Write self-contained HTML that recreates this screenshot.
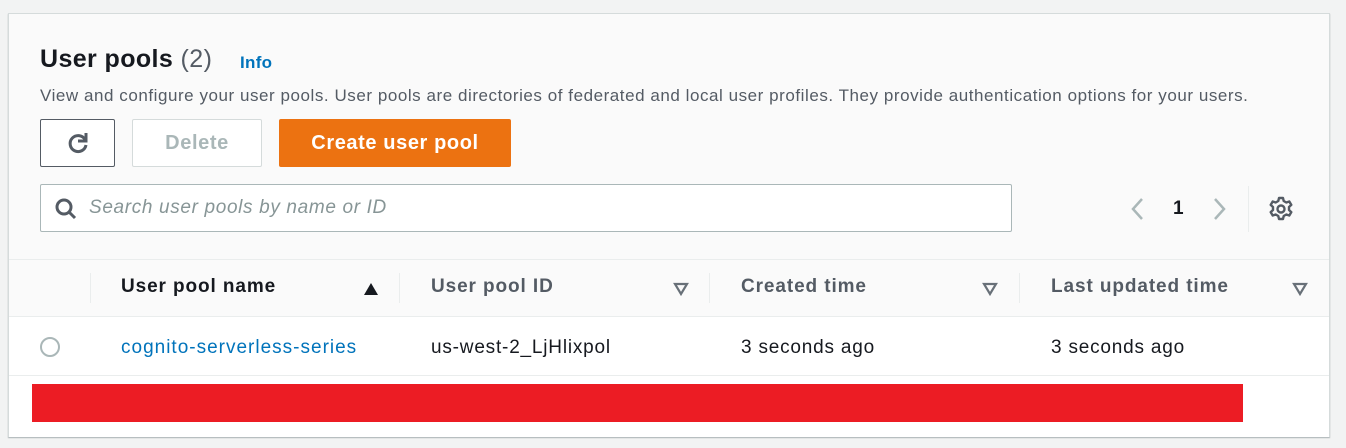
<!DOCTYPE html>
<html><head><style>
*{box-sizing:border-box;margin:0;padding:0}
body{width:1346px;height:448px;background:#f2f3f3;font-family:"Liberation Sans",sans-serif;position:relative;overflow:hidden;color:#16191f}
.panel{position:absolute;left:8px;top:13px;width:1322px;height:424px;background:#fafafa;border:1px solid #d5dbdb;box-shadow:0 1px 1px rgba(0,28,36,.3)}
.abs{position:absolute;white-space:nowrap}
.title{left:31px;top:31px;font-size:25px;font-weight:bold;letter-spacing:.4px}
.title span{font-weight:normal;color:#545b64}
.info{left:231px;top:39px;font-size:17px;font-weight:bold;color:#0073bb;letter-spacing:.3px}
.desc{left:31px;top:72px;font-size:17px;letter-spacing:.55px;color:#545b64}
.btn{position:absolute;border-radius:2px;font-weight:bold;font-size:20px;letter-spacing:.6px;display:flex;align-items:center;justify-content:center}
.search{left:31px;top:170px;width:972px;height:48px;border:1px solid #aab7b8;background:#fff;border-radius:2px}
.search .ph{position:absolute;left:48px;top:12px;font-size:19px;font-style:italic;color:#879596;letter-spacing:.65px}
.thead{left:0;top:245px;width:1320px;height:58px;border-top:1px solid #eaeded;border-bottom:1px solid #eaeded}
.th{position:absolute;top:16px;font-size:19px;font-weight:bold;color:#545b64;letter-spacing:.9px}
.sep{position:absolute;top:13px;width:1px;height:30px;background:#eaeded}
.row{left:0;top:303px;width:1320px;height:120px;background:#fff}
.td{position:absolute;top:20px;font-size:19px;letter-spacing:.8px}
</style></head><body>
<div class="panel">
 <div class="abs title">User pools <span>(2)</span></div>
 <div class="abs info">Info</div>
 <div class="abs desc">View and configure your user pools. User pools are directories of federated and local user profiles. They provide authentication options for your users.</div>
 <div class="btn" style="left:31px;top:105px;width:75px;height:48px;border:1px solid #545b64;background:#fff">
  <svg width="26" height="26" viewBox="0 0 26 26"><path d="M20 9.5A8 8 0 1 0 21 15" fill="none" stroke="#545b64" stroke-width="3"/><path d="M21 3v8h-8" fill="none" stroke="#545b64" stroke-width="3" stroke-linejoin="miter"/></svg>
 </div>
 <div class="btn" style="left:123px;top:105px;width:130px;height:48px;border:1px solid #d5dbdb;background:#fff;color:#aab7b8">Delete</div>
 <div class="btn" style="left:270px;top:105px;width:232px;height:48px;background:#ec7211;color:#fff">Create user pool</div>
 <div class="abs search">
  <svg style="position:absolute;left:13px;top:12px" width="24" height="24" viewBox="0 0 24 24"><circle cx="10" cy="10" r="7" fill="none" stroke="#545b64" stroke-width="3"/><path d="M15 15l6 6" stroke="#545b64" stroke-width="3"/></svg>
  <div class="ph">Search user pools by name or ID</div>
 </div>
 <svg class="abs" style="left:1121px;top:183px" width="14" height="24" viewBox="0 0 14 24"><path d="M12 2L3 12l9 10" fill="none" stroke="#aab7b8" stroke-width="2.5"/></svg>
 <div class="abs" style="left:1164px;top:184px;font-size:19px;font-weight:bold">1</div>
 <svg class="abs" style="left:1204px;top:183px" width="14" height="24" viewBox="0 0 14 24"><path d="M2 2l9 10-9 10" fill="none" stroke="#aab7b8" stroke-width="2.5"/></svg>
 <div class="abs" style="left:1239px;top:172px;width:1px;height:46px;background:#eaeded"></div>
 <svg class="abs" style="left:1259px;top:182px" width="26" height="26" viewBox="0 0 26 26"><path d="M11 2h4l.7 3 2.6 1.5 3-1 2 3.4-2.3 2.1v3l2.3 2.1-2 3.4-3-1-2.6 1.5-.7 3h-4l-.7-3-2.6-1.5-3 1-2-3.4 2.3-2.1v-3L2.7 8.9l2-3.4 3 1L10.3 5z" fill="none" stroke="#545b64" stroke-width="2.4" stroke-linejoin="round"/><circle cx="13" cy="13" r="3.5" fill="none" stroke="#545b64" stroke-width="2.4"/></svg>
 <div class="abs thead">
  <div class="sep" style="left:81px"></div>
  <div class="th" style="left:112px;color:#16191f">User pool name</div>
  <svg style="position:absolute;left:354px;top:22px" width="16" height="14"><path d="M8 1l7 12H1z" fill="#16191f"/></svg>
  <div class="sep" style="left:390px"></div>
  <div class="th" style="left:422px">User pool ID</div>
  <svg style="position:absolute;left:664px;top:22px" width="16" height="14"><path d="M2 2h12L8 12z" fill="none" stroke="#687078" stroke-width="2.2"/></svg>
  <div class="sep" style="left:700px"></div>
  <div class="th" style="left:732px">Created time</div>
  <svg style="position:absolute;left:973px;top:22px" width="16" height="14"><path d="M2 2h12L8 12z" fill="none" stroke="#687078" stroke-width="2.2"/></svg>
  <div class="sep" style="left:1010px"></div>
  <div class="th" style="left:1042px">Last updated time</div>
  <svg style="position:absolute;left:1283px;top:22px" width="16" height="14"><path d="M2 2h12L8 12z" fill="none" stroke="#687078" stroke-width="2.2"/></svg>
 </div>
 <div class="abs row">
  <div style="position:absolute;left:31px;top:20px;width:20px;height:20px;border:2px solid #aab7b8;border-radius:50%"></div>
  <div class="td" style="left:112px;color:#0073bb;letter-spacing:1px">cognito-serverless-series</div>
  <div class="td" style="left:422px">us-west-2_LjHlixpol</div>
  <div class="td" style="left:732px">3 seconds ago</div>
  <div class="td" style="left:1042px">3 seconds ago</div>
  <div style="position:absolute;left:0;top:58px;width:1320px;height:1px;background:#eaeded"></div>
  <div style="position:absolute;left:23px;top:67px;width:1211px;height:38px;background:#ec1c24"></div>
 </div>
</div>
</body></html>
